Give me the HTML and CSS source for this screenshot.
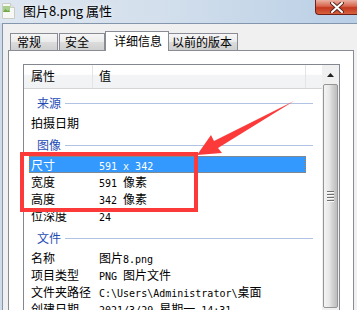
FILE: index.html
```html
<!DOCTYPE html>
<html>
<head>
    <meta charset="utf-8">
    <title>图片8.png 属性</title>
    <link rel="stylesheet" href="styles.css">
</head>
<body>
<div id="window">
    <div class="titlebar">
        <svg class="app-icon" width="13" height="16" viewBox="0 0 13 16">
            <path d="M0.5 0.5 H8.5 L12.5 4.5 V15.5 H0.5 Z" fill="#f7f8f4" stroke="#c9cec4"/>
            <path d="M8.5 0.5 V4.5 H12.5" fill="#e4e7e0" stroke="#c9cec4"/>
            <rect x="1" y="3" width="7" height="6" fill="#a9cf8e"/>
            <path d="M1 9 L3.5 6 L5.5 8 L6.5 7 L8 9 Z" fill="#6fa64c"/>
        </svg>
        <span class="title">图片8.png 属性</span>
        <div class="close-btn">
            <svg width="14" height="11" viewBox="0 0 14 11">
                <path d="M2 1 L12 10 M12 1 L2 10" stroke="#5a2a22" stroke-width="4" stroke-linecap="round"/>
                <path d="M2 1 L12 10 M12 1 L2 10" stroke="#ffffff" stroke-width="2" stroke-linecap="round"/>
            </svg>
        </div>
    </div>

    <div class="client">
        <div class="tabs">
            <div class="tab tab-1">常规</div>
            <div class="tab tab-2">安全</div>
            <div class="tab tab-3 active">详细信息</div>
            <div class="tab tab-4">以前的版本</div>
        </div>
        <div class="tab-page">
            <div class="list-view">
                <div class="list-main">
                    <div class="list-header">
                        <div class="col-head col-name">属性</div>
                        <div class="col-head col-value">值</div>
                        <div class="col-head col-fill"></div>
                    </div>
                    <div class="list-body">
                        <div class="group"><span>来源</span><i class="group-line"></i></div>
                        <div class="row"><span class="name">拍摄日期</span><span class="value"></span></div>

                        <div class="group"><span>图像</span><i class="group-line"></i></div>
                        <div class="row selected"><span class="name">尺寸</span><span class="value"><span class="mono">591 x 342</span></span></div>
                        <div class="row"><span class="name">宽度</span><span class="value"><span class="mono">591 </span>像素</span></div>
                        <div class="row"><span class="name">高度</span><span class="value"><span class="mono">342 </span>像素</span></div>
                        <div class="row"><span class="name">位深度</span><span class="value"><span class="mono">24</span></span></div>

                        <div class="group"><span>文件</span><i class="group-line"></i></div>
                        <div class="row"><span class="name">名称</span><span class="value">图片<span class="mono">8.png</span></span></div>
                        <div class="row"><span class="name">项目类型</span><span class="value"><span class="mono">PNG </span>图片文件</span></div>
                        <div class="row"><span class="name">文件夹路径</span><span class="value"><span class="mono">C:\Users\Administrator\</span>桌面</span></div>
                        <div class="row"><span class="name">创建日期</span><span class="value"><span class="mono">2021/3/29 </span>星期一<span class="mono"> 14:31</span></span></div>
                    </div>
                </div>
                <div class="scrollbar">
                    <div class="scroll-up">
                        <svg width="7" height="4" viewBox="0 0 7 4"><path d="M0 4 L3.5 0 L7 4 Z" fill="#222"/></svg>
                    </div>
                    <div class="scroll-thumb">
                        <div class="grip"><i></i><i></i><i></i><i></i></div>
                    </div>
                </div>
            </div>
        </div>
    </div>

    <!-- annotation drawn on top of the screenshot -->
    <div class="mark-box"></div>
    <svg class="mark-arrow" width="357" height="310" viewBox="0 0 357 310">
        <polygon points="197,155 222,153 218,148 294,101 214,141 211,135" fill="#fd3a3a"/>
    </svg>
</div>
</body>
</html>
```

FILE: styles.css
```css
body {
    margin: 0;
    font-family: "Noto Sans CJK SC", "Noto Sans", sans-serif;
    font-size: 12px;
    color: #000;
}

#window {
    position: relative;
    width: 357px;
    height: 310px;
    overflow: hidden;
    background: #cfdbe9;
}

.titlebar {
    height: 23px;
    display: flex;
    align-items: flex-start;
    background: linear-gradient(90deg, #dde6f0 0%, #d3dfec 45%, #b9cfe6 100%);
}

.app-icon {
    margin: 3px 0 0 2px;
}

.title {
    margin: 2px 0 0 8px;
    font-size: 13px;
    line-height: 18px;
    text-shadow: 0 0 6px rgba(255, 255, 255, 0.9);
}

.close-btn {
    margin-left: auto;
    width: 41px;
    height: 14px;
    border: 1px solid #6e2116;
    border-top: none;
    border-right: none;
    border-radius: 0 0 0 4px;
    background: linear-gradient(#eab2a4 0%, #d8644c 45%, #c3381f 55%, #d9623e 100%);
    display: flex;
    justify-content: center;
    align-items: center;
}

.client {
    height: 286px;
    margin-left: 2px;
    border-top: 1px solid #8396ad;
    border-left: 1px solid #8396ad;
    background: #f0f0f0;
}

.tabs {
    display: flex;
    align-items: flex-end;
    height: 26px;
    margin-left: 7px;
}

.tab {
    box-sizing: border-box;
    height: 17px;
    border: 1px solid #898c95;
    border-bottom: none;
    padding-left: 5px;
    line-height: 16px;
    background: linear-gradient(#f6f6f6 0%, #ebebeb 50%, #dcdcdc 51%, #cfcfcf 100%);
    white-space: nowrap;
    position: relative;
}

.tab-1 {
    width: 48px;
    padding-left: 6px;
}

.tab-2 {
    width: 46px;
    margin-left: 1px;
}

.tab-3 {
    width: 64px;
    padding-left: 8px;
}

.tab-4 {
    width: 70px;
    margin-left: -1px;
    padding-left: 3px;
}

.tab.active {
    height: 20px;
    margin-bottom: -1px;
    background: #fff;
    line-height: 17px;
    z-index: 1;
}

.tab-page {
    box-sizing: border-box;
    width: 346px;
    height: 262px;
    margin-left: 5px;
    border: 1px solid #898c95;
    background: #fff;
    padding: 13px 13px 0 14px;
}

.list-view {
    display: flex;
    height: 260px;
    border: 1px solid #828790;
    border-bottom: none;
}

.list-main {
    width: 298px;
}

.list-header {
    display: flex;
    height: 23px;
    border-bottom: 1px solid #d5d5d5;
    background: linear-gradient(#ffffff 0%, #ffffff 40%, #f3f4f6 45%, #f1f2f4 100%);
}

.col-head {
    box-sizing: border-box;
    height: 23px;
    line-height: 22px;
    border-right: 1px solid #e3e4e6;
}

.col-name {
    width: 69px;
    padding-left: 7px;
}

.col-value {
    width: 213px;
    padding-left: 6px;
}

.col-fill {
    flex: 1;
    border-right: none;
}

.group {
    display: flex;
    align-items: center;
    height: 25px;
    padding: 3px 9px 0 13px;
    box-sizing: border-box;
    line-height: 20px;
    color: #1f4db5;
}

.group-line {
    flex: 1;
    height: 1px;
    margin-left: 4px;
    background: #b2c2e2;
}

.row {
    box-sizing: border-box;
    display: flex;
    width: 277px;
    height: 17px;
    margin-left: 5px;
    padding-left: 2px;
    line-height: 17px;
    white-space: nowrap;
}

.row.selected {
    background: #3399ff;
    color: #fff;
    outline: 1px dotted #c87a28;
    outline-offset: -1px;
}

.name {
    width: 68px;
}

.mono {
    font-family: "DejaVu Sans Mono", "Liberation Mono", monospace;
    font-size: 10px;
    white-space: pre;
}

.scrollbar {
    width: 17px;
    background: #f0f0f0;
}

.scroll-up {
    height: 19px;
    display: flex;
    justify-content: center;
    align-items: center;
}

.scroll-thumb {
    box-sizing: border-box;
    height: 224px;
    margin: 0 0 0 1px;
    width: 15px;
    border: 1px solid #959595;
    border-radius: 2px;
    background: linear-gradient(90deg, #f4f4f4 0%, #e8e8e8 40%, #d6d6d6 60%, #bcbcbc 100%);
    display: flex;
    justify-content: center;
    padding-top: 106px;
}

.grip {
    display: flex;
    flex-direction: column;
    gap: 1px;
}

.grip i {
    display: block;
    width: 7px;
    height: 1px;
    background: #6f6f6f;
    border-bottom: 1px solid #fafafa;
}

.mark-box {
    position: absolute;
    left: 20px;
    top: 152px;
    width: 170px;
    height: 52px;
    border: 4px solid #fd3a3a;
}

.mark-arrow {
    position: absolute;
    left: 0;
    top: 0;
}
```
